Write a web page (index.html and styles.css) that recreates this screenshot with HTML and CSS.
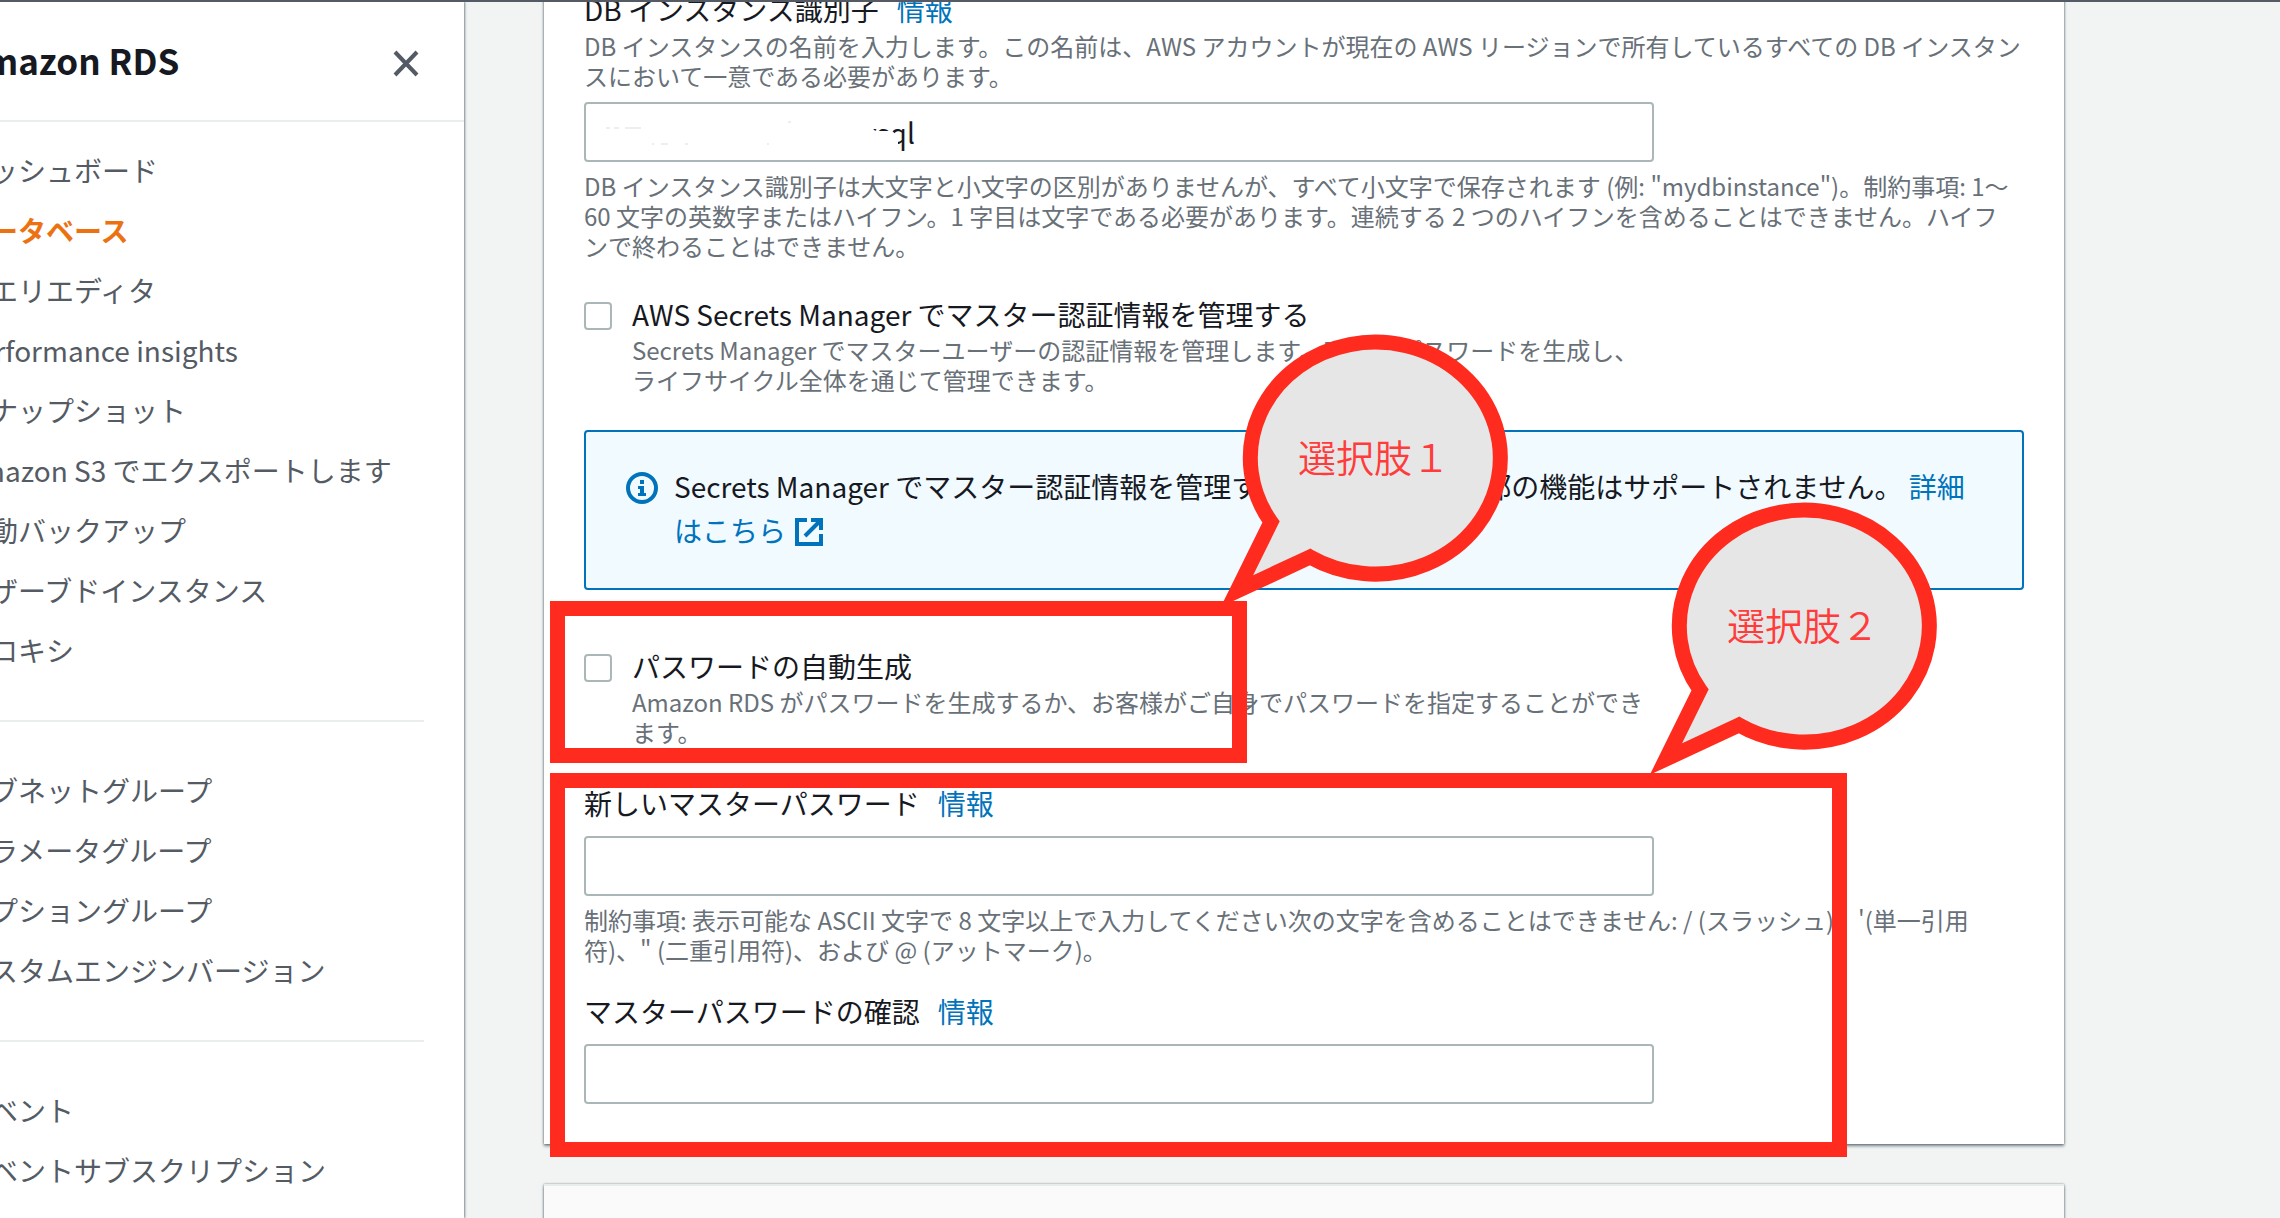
FILE: index.html
```html
<!DOCTYPE html>
<html lang="ja">
<head>
  <meta charset="UTF-8">
  <title>Amazon RDS</title>
  <link rel="stylesheet" href="styles.css">
</head>
<body>

  <div class="layout">
    <aside class="sidebar">
      <header class="sidebar-header">
        <h1>Amazon RDS</h1>
        <button class="close" type="button" aria-label="閉じる">
          <svg width="26" height="28" viewBox="0 0 26 28"><path d="M2 2 L24 25 M24 2 L2 25"/></svg>
        </button>
      </header>
      <nav>
        <ul>
          <li><a href="#">ダッシュボード</a></li>
          <li><a href="#" class="active">データベース</a></li>
          <li><a href="#">クエリエディタ</a></li>
          <li><a href="#">Performance insights</a></li>
          <li><a href="#">スナップショット</a></li>
          <li><a href="#">Amazon S3 でエクスポートします</a></li>
          <li><a href="#">自動バックアップ</a></li>
          <li><a href="#">リザーブドインスタンス</a></li>
          <li><a href="#">プロキシ</a></li>
        </ul>
        <hr>
        <ul>
          <li><a href="#">サブネットグループ</a></li>
          <li><a href="#">パラメータグループ</a></li>
          <li><a href="#">オプショングループ</a></li>
          <li><a href="#">カスタムエンジンバージョン</a></li>
        </ul>
        <hr>
        <ul>
          <li><a href="#">イベント</a></li>
          <li><a href="#">イベントサブスクリプション</a></li>
        </ul>
      </nav>
    </aside>

    <main class="content">
      <form class="card">
        <div class="field">
          <div class="label-row">
            <label for="db-id">DB インスタンス識別子</label>
            <a href="#">情報</a>
          </div>
          <p class="hint">DB インスタンスの名前を入力します。この名前は、AWS アカウントが現在の AWS リージョンで所有しているすべての DB インスタン<br>スにおいて一意である必要があります。</p>
          <div class="masked">
            <input type="text" id="db-id" value="mysql">
            <svg class="mask" width="340" height="36" viewBox="0 0 340 36">
              <path class="eraser" d="M0 0 H264 L270 9 L278 13 H294 L300 18 V36 H0 Z"/>
              <path class="smudge" d="M8 10h4 M16 10h5 M27 10h16 M190 4h3 M54 26h2 M63 26h7 M87 26h3 M169 26h2"/>
            </svg>
          </div>
          <p class="hint">DB インスタンス識別子は大文字と小文字の区別がありませんが、すべて小文字で保存されます (例: "mydbinstance")。制約事項: 1〜<br>60 文字の英数字またはハイフン。1 字目は文字である必要があります。連続する 2 つのハイフンを含めることはできません。ハイフ<br>ンで終わることはできません。</p>
        </div>

        <div class="check">
          <input type="checkbox" id="secrets">
          <div>
            <label for="secrets">AWS Secrets Manager でマスター認証情報を管理する</label>
            <p class="hint">Secrets Manager でマスターユーザーの認証情報を管理します。RDS はパスワードを生成し、<br>ライフサイクル全体を通じて管理できます。</p>
          </div>
        </div>

        <div class="alert">
          <svg class="info" width="32" height="32" viewBox="0 0 32 32">
            <circle cx="16" cy="16" r="14"/>
            <path d="M14 8h4v4h-4z M12 14h6v7h2v3h-8v-3h2v-4h-2z"/>
          </svg>
          <p>Secrets Manager でマスター認証情報を管理する場合は、現在一部の機能はサポートされません。
            <a href="#">詳細<br>はこちら
              <svg class="external" width="28" height="28" viewBox="0 0 28 28">
                <path d="M12 2H2v24h24V16 M16 2h10v10 M26 2L10 18"/>
              </svg>
            </a>
          </p>
        </div>

        <div class="check">
          <input type="checkbox" id="auto-password">
          <div>
            <label for="auto-password">パスワードの自動生成</label>
            <p class="hint">Amazon RDS がパスワードを生成するか、お客様がご自身でパスワードを指定することができ<br>ます。</p>
          </div>
        </div>

        <div class="field">
          <div class="label-row">
            <label for="new-password">新しいマスターパスワード</label>
            <a href="#">情報</a>
          </div>
          <input type="password" id="new-password">
          <p class="hint">制約事項: 表示可能な ASCII 文字で 8 文字以上で入力してください次の文字を含めることはできません: / (スラッシュ)、'(単一引用<br>符)、" (二重引用符)、および @ (アットマーク)。</p>
        </div>

        <div class="field">
          <div class="label-row">
            <label for="confirm-password">マスターパスワードの確認</label>
            <a href="#">情報</a>
          </div>
          <input type="password" id="confirm-password">
        </div>

        <!-- 注釈 -->
        <div class="callout callout-1">
          <svg width="300" height="280" viewBox="0 0 300 280"><path d="M95 227 L22 261 L56 192 A125 116 0 1 1 95 227 Z"/></svg>
          <span>選択肢１</span>
        </div>
        <div class="callout callout-2">
          <svg width="300" height="280" viewBox="0 0 300 280"><path d="M95 227 L22 261 L56 192 A125 116 0 1 1 95 227 Z"/></svg>
          <span>選択肢２</span>
        </div>
        <div class="frame frame-1"></div>
        <div class="frame frame-2"></div>
      </form>

      <section class="card next-card"></section>
    </main>
  </div>

</body>
</html>
```

FILE: styles.css
```css
* {
  box-sizing: border-box;
}

body {
  margin: 0;
  height: 100vh;
  overflow: hidden;
  border-top: 2px solid #545b64;
  background: #f2f3f3;
  color: #16191f;
  font-family: "Noto Sans CJK JP", sans-serif;
  font-size: 28px;
  line-height: 44px;
}

a {
  color: #0073bb;
  text-decoration: none;
}

p, ul, h1 {
  margin: 0;
  padding: 0;
}

.layout {
  display: flex;
  height: 100%;
}

/* menu */
.sidebar {
  flex: none;
  width: 542px;
  margin-left: -78px;
  background: white;
  box-shadow: 1px 0 2px rgba(0, 28, 36, 0.5);
}

.sidebar-header {
  display: flex;
  align-items: center;
  justify-content: space-between;
  height: 120px;
  padding: 0 45px 2px 40px;
  border-bottom: 2px solid #eaeded;
}

h1 {
  font-size: 35px;
  font-weight: bold;
}

.close {
  display: flex;
  margin-top: 8px;
  padding: 0;
  border: 0;
  background: none;
}

.close path {
  fill: none;
  stroke: #545b64;
  stroke-width: 4;
}

nav {
  padding: 18px 40px 0;
}

nav ul {
  list-style: none;
}

nav a {
  display: block;
  color: #545b64;
  font-size: 28px;
  line-height: 60px;
  white-space: nowrap;
}

nav .active {
  color: #ec7211;
  font-weight: bold;
}

nav hr {
  height: 2px;
  margin: 40px 0 38px;
  border: 0;
  background: #eaeded;
}

/* form */
.content {
  flex: 1;
  overflow: hidden;
  padding: 0 216px 0 80px;
}

.card {
  position: relative;
  margin-top: -15px;
  padding: 0 40px 31px;
  background: white;
  box-shadow: 0 2px 3px rgba(0, 28, 36, 0.5), 0 0 2px rgba(0, 28, 36, 0.4);
}

.next-card {
  height: 120px;
  margin-top: 40px;
  border-top: 2px solid #eaeded;
  background: #fafafa;
}

.label-row {
  display: flex;
  gap: 18px;
}

.field + .field {
  margin-top: 24px;
}

.hint {
  color: #687078;
  font-size: 24px;
  line-height: 30px;
}

.field input {
  display: block;
  width: 100%;
  max-width: 1070px;
  height: 60px;
  margin: 11px 0 9px;
  padding: 0 20px;
  border: 2px solid #aab7b8;
  border-radius: 4px;
  background: white;
  color: #16191f;
  font: inherit;
}

.masked {
  position: relative;
}

.masked input {
  padding-left: 250px;
}

.mask {
  position: absolute;
  top: 16px;
  left: 14px;
}

.eraser {
  fill: white;
}

.smudge {
  fill: none;
  stroke: #ddd;
  stroke-width: 1;
}

.check {
  display: flex;
  gap: 20px;
  margin: 32px 0 34px;
  line-height: 42px;
}

.check input {
  appearance: none;
  flex: none;
  width: 28px;
  height: 28px;
  margin: 9px 0 0;
  border: 2px solid #aab7b8;
  border-radius: 4px;
  background: white;
}

.alert {
  display: flex;
  gap: 16px;
  margin: 35px 0 55px;
  padding: 32px 40px 36px;
  border: 2px solid #0073bb;
  border-radius: 4px;
  background: #f1faff;
}

.info {
  flex: none;
  margin-top: 8px;
}

.info circle {
  fill: none;
  stroke: #0073bb;
  stroke-width: 4;
}

.info path {
  fill: #0073bb;
}

.external {
  margin-left: 3px;
  vertical-align: -4px;
}

.external path {
  fill: none;
  stroke: #0073bb;
  stroke-width: 4;
}

/* annotations */
.frame {
  position: absolute;
  left: 6px;
  border: 15px solid #fe2b1e;
}

.frame-1 {
  top: 614px;
  width: 697px;
  height: 162px;
}

.frame-2 {
  top: 786px;
  width: 1297px;
  height: 384px;
}

.callout {
  position: absolute;
  width: 300px;
  height: 280px;
}

.callout-1 {
  top: 343px;
  left: 671px;
}

.callout-2 {
  top: 511px;
  left: 1100px;
}

.callout path {
  fill: #e6e6e6;
  stroke: #fe2b1e;
  stroke-width: 15;
  stroke-miterlimit: 10;
}

.callout span {
  position: absolute;
  top: 104px;
  left: 83px;
  color: #ff3b3b;
  font-size: 38px;
  font-weight: 350;
  white-space: nowrap;
}
```
